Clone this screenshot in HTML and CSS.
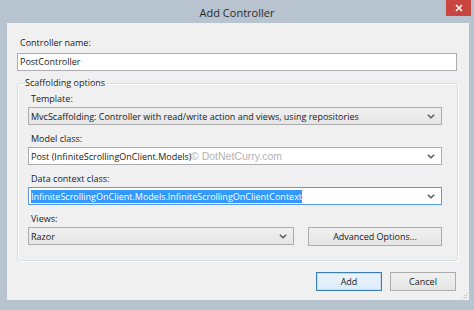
FILE: index.html
```html
<!DOCTYPE html>
<html>
<head>
<meta charset="utf-8">
<link rel="stylesheet" href="styles.css">
</head>
<body>
<div class="window">
  <div class="titlebar">
    <span class="spacer"></span>
    <span class="title">Add Controller</span>
    <div class="close-wrap">
      <button class="close" aria-label="Close">
        <svg width="8" height="8" viewBox="0 0 8 8"><path d="M1 1 L7 7 M7 1 L1 7" stroke="#fff" stroke-width="1.6" fill="none"/></svg>
      </button>
    </div>
  </div>
  <div class="client">
    <div class="lbl first">Controller name:</div>
    <div class="textbox">PostController</div>
    <fieldset class="group">
      <legend>Scaffolding options</legend>
      <div class="field">
        <div class="lbl">Template:</div>
        <div class="combo list"><span class="val">MvcScaffolding: Controller with read/write action and views, using repositories</span><svg class="arrow" width="8" height="5" viewBox="0 0 8 5"><path d="M0.8 0.8 L4 3.8 L7.2 0.8" stroke="#5a5a5a" stroke-width="1.5" fill="none"/></svg></div>
      </div>
      <div class="field">
        <div class="lbl">Model class:</div>
        <div class="combo edit"><span class="val">Post (InfiniteScrollingOnClient.Models)</span><span class="watermark">© DotNetCurry.com</span><svg class="arrow" width="8" height="5" viewBox="0 0 8 5"><path d="M0.8 0.8 L4 3.8 L7.2 0.8" stroke="#5a5a5a" stroke-width="1.5" fill="none"/></svg></div>
      </div>
      <div class="field">
        <div class="lbl">Data context class:</div>
        <div class="combo edit focused"><span class="val"><span class="sel">InfiniteScrollingOnClient.Models.InfiniteScrollingOnClientContext</span></span><svg class="arrow" width="8" height="5" viewBox="0 0 8 5"><path d="M0.8 0.8 L4 3.8 L7.2 0.8" stroke="#5a5a5a" stroke-width="1.5" fill="none"/></svg></div>
      </div>
      <div class="field">
        <div class="lbl">Views:</div>
        <div class="views-row">
          <div class="combo list"><span class="val">Razor</span><svg class="arrow" width="8" height="5" viewBox="0 0 8 5"><path d="M0.8 0.8 L4 3.8 L7.2 0.8" stroke="#5a5a5a" stroke-width="1.5" fill="none"/></svg></div>
          <button class="btn adv">Advanced Options...</button>
        </div>
      </div>
    </fieldset>
    <div class="actions">
      <button class="btn default">Add</button>
      <button class="btn">Cancel</button>
    </div>
    <svg class="grip" width="7" height="7" viewBox="0 0 7 7"><g fill="#b9b9b9"><rect x="5" y="1" width="1" height="1"/><rect x="3" y="3" width="1" height="1"/><rect x="5" y="3" width="1" height="1"/><rect x="1" y="5" width="1" height="1"/><rect x="3" y="5" width="1" height="1"/><rect x="5" y="5" width="1" height="1"/></g></svg>
  </div>
</div>
</body>
</html>
```
FILE: styles.css
```css
html, body {
  margin: 0;
  padding: 0;
}
body {
  width: 474px;
  height: 310px;
  overflow: hidden;
  font-family: "Open Sans", "Noto Sans", sans-serif;
  font-size: 9px;
  color: #1a1a1a;
}
.window {
  width: 474px;
  height: 310px;
  box-sizing: border-box;
  background: #b7c3ce;
  padding: 0 5px 10px 7px;
  display: flex;
  flex-direction: column;
}
.titlebar {
  height: 23px;
  margin: 0 -5px 0 -7px;
  display: grid;
  grid-template-columns: 1fr auto 1fr;
  align-items: start;
}
.title {
  font-size: 11px;
  line-height: 23px;
  color: #2b2b2b;
  padding-top: 1px;
}
.close-wrap {
  display: flex;
  justify-content: flex-end;
  padding-right: 3px;
}
.close {
  width: 25px;
  height: 16px;
  border: none;
  padding: 0;
  margin: 0;
  background: #c8463f;
  display: flex;
  align-items: center;
  justify-content: center;
}
.client {
  flex: 1;
  background: #f0f0f0;
  position: relative;
  padding: 13px 11px 0 10px;
  display: flex;
  flex-direction: column;
}
.lbl {
  line-height: 14px;
  height: 14px;
  white-space: nowrap;
}
.lbl.first {
  margin-left: 3px;
  margin-bottom: 3px;
}
.textbox {
  height: 18px;
  box-sizing: border-box;
  border: 1px solid #abadb3;
  background: #fff;
  line-height: 16px;
  padding-left: 2px;
  margin-right: 1px;
}
.group {
  margin: 5px 0 0 0;
  padding: 2px 15px 14px 10px;
  border: 1px solid #d5dfe5;
  box-shadow: inset 1px 1px 0 #fff, 1px 1px 0 #fff;
  border-radius: 2px;
  min-width: 0;
  display: flex;
  flex-direction: column;
  gap: 7px;
}
.group legend {
  padding: 0 2px;
  margin-left: -5px;
  line-height: 14px;
}
.field {
  display: flex;
  flex-direction: column;
  gap: 1px;
}
.field .lbl {
  margin-left: 3px;
}
.combo {
  height: 18px;
  box-sizing: border-box;
  border: 1px solid #acacac;
  display: flex;
  align-items: center;
  padding: 0 6px 0 2px;
  position: relative;
  white-space: nowrap;
}
.combo.list {
  background: linear-gradient(#f0f0f0, #e5e5e5);
}
.combo.edit {
  background: #fff;
  border-color: #abadb3;
}
.combo.focused {
  border-color: #569de5;
}
.combo .val {
  flex: 1;
  overflow: hidden;
}
.combo .sel {
  background: #3399ff;
  color: #fff;
}
.combo .arrow {
  flex: none;
}
.watermark {
  position: absolute;
  left: 162px;
  top: 1px;
  font-family: "Liberation Sans", Arial, sans-serif;
  font-size: 10.5px;
  line-height: 14px;
  color: #b4b4b4;
}
.views-row {
  display: grid;
  grid-template-columns: 1fr 134px;
  column-gap: 14px;
  align-items: start;
}
.btn {
  font-family: inherit;
  font-size: inherit;
  color: #1a1a1a;
  height: 19px;
  box-sizing: border-box;
  border: 1px solid #acacac;
  background: linear-gradient(#f0f0f0, #e5e5e5);
  padding: 0;
  margin: 0;
  line-height: 17px;
}
.actions {
  margin-top: 11px;
  margin-right: 2px;
  display: flex;
  justify-content: flex-end;
  gap: 8px;
}
.actions .btn {
  width: 66px;
}
.btn.default {
  border-color: #3c7fb1;
  background: linear-gradient(#ecf4fc, #dcecfc);
  box-shadow: inset 0 0 0 1px #c8dcf0;
}
.grip {
  position: absolute;
  right: 1px;
  bottom: 1px;
}
```
